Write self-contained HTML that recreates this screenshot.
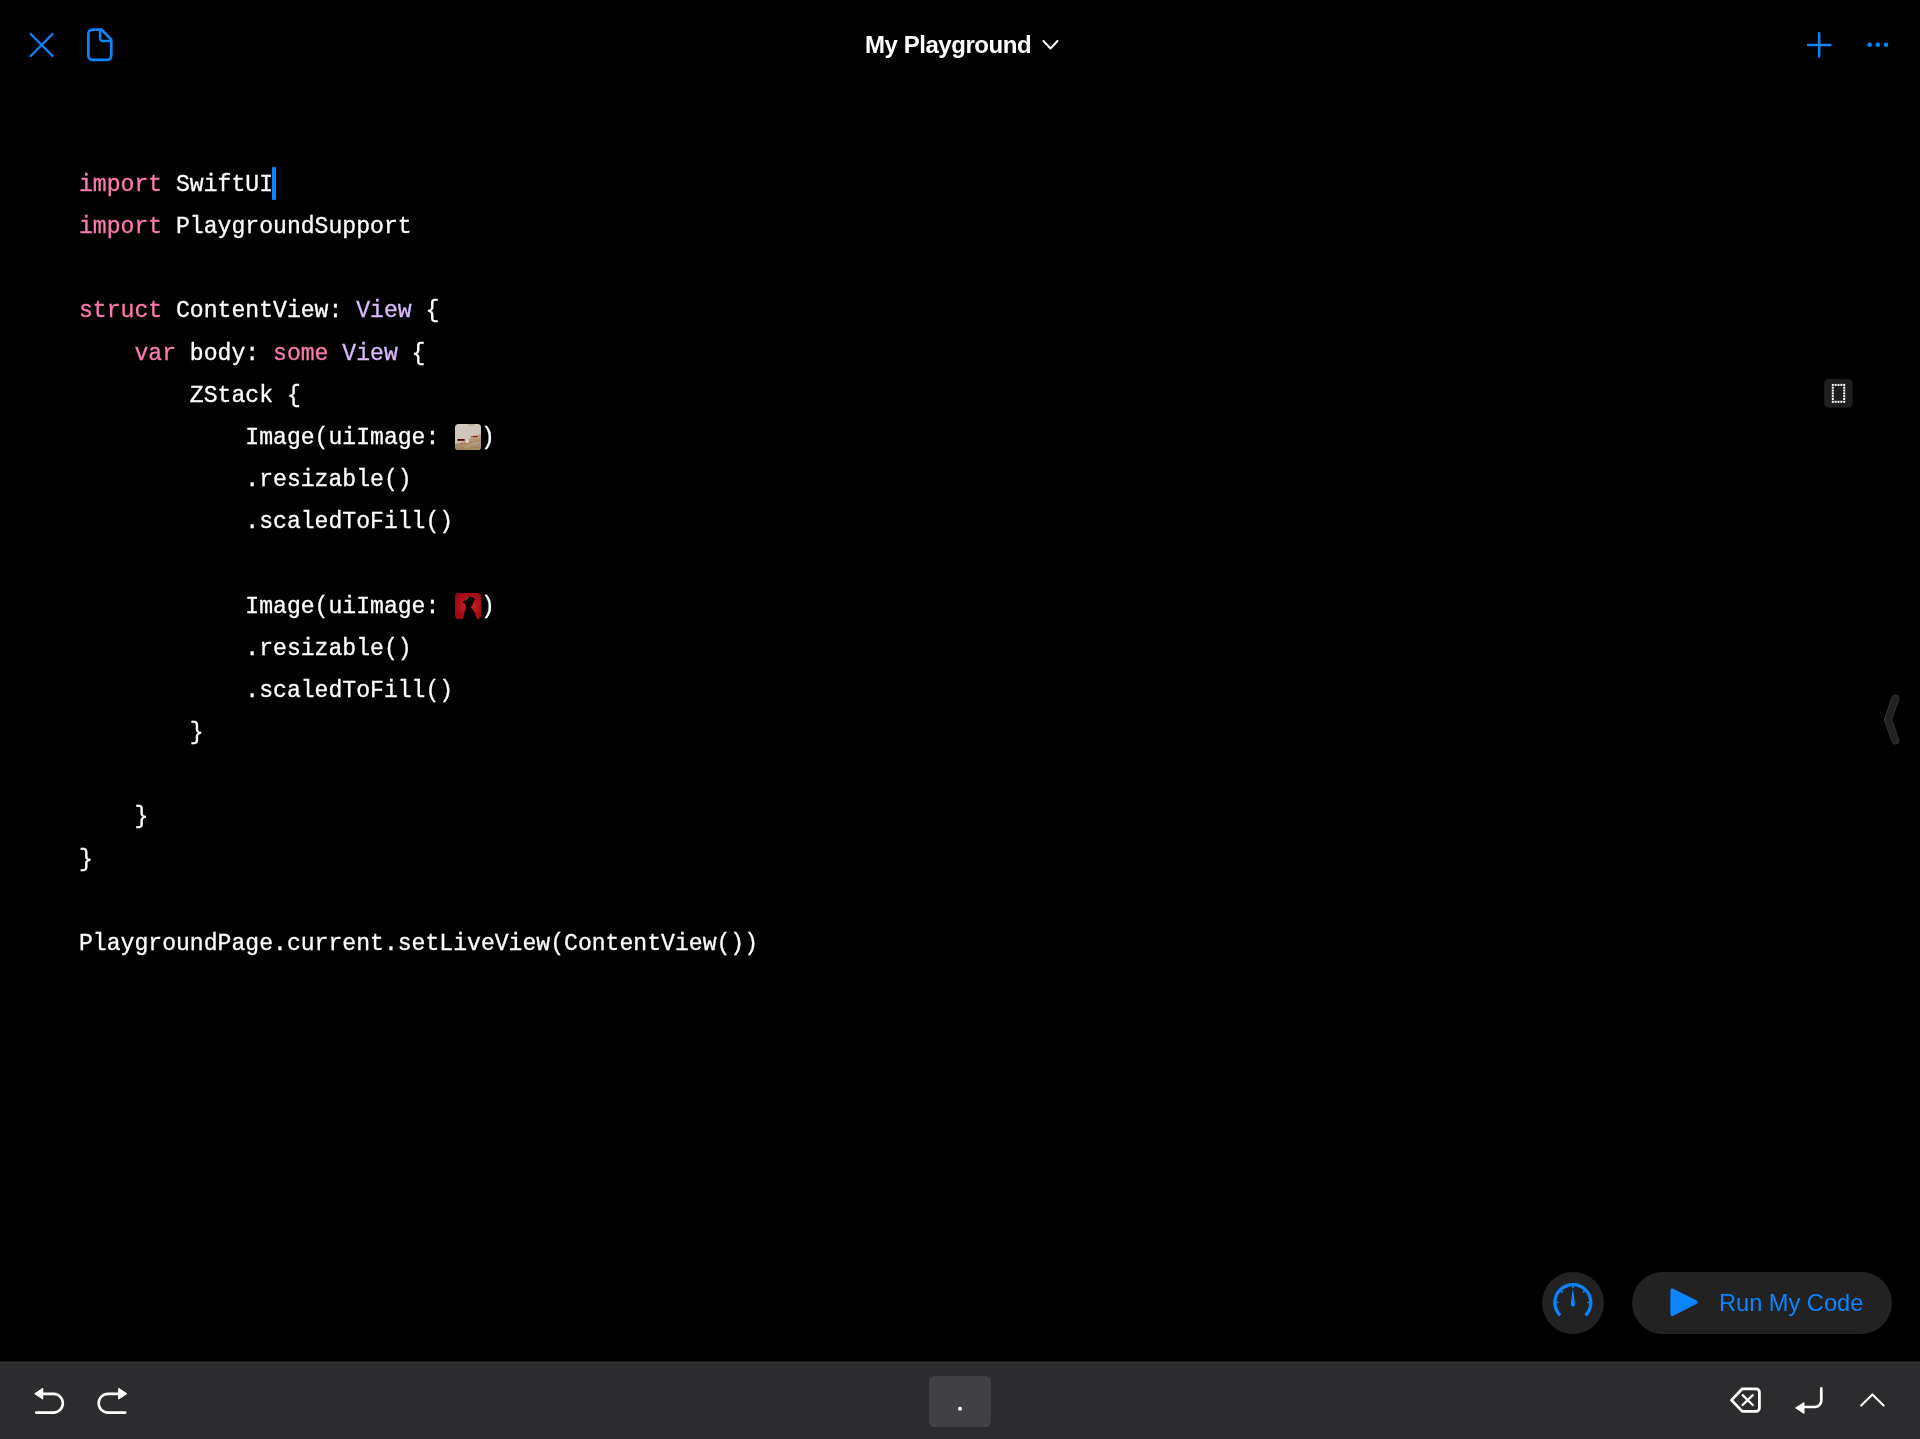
<!DOCTYPE html>
<html><head><meta charset="utf-8">
<style>
html,body{margin:0;padding:0;background:#000;width:1920px;height:1439px;overflow:hidden;position:relative;}
*{box-sizing:border-box;}
.abs{position:absolute;z-index:2;}
.code,.title,.runtxt{will-change:transform;}
.code{position:absolute;left:78.5px;top:164.3px;font-family:"Liberation Mono",monospace;font-size:23.1px;line-height:42.17px;color:#fff;}
.code div{height:42.17px;white-space:pre;}
.code{-webkit-text-stroke:0.3px currentColor;}
.k{color:#FF7AB2;}
.t{color:#DABAFF;}
.title{position:absolute;left:865px;top:27px;font-family:"Liberation Sans",sans-serif;font-weight:bold;font-size:24px;letter-spacing:-0.45px;color:#fff;line-height:36px;white-space:nowrap;}
.run{position:absolute;left:1632px;top:1271.5px;width:260px;height:62px;border-radius:31px;background:#222222;}
.gauge{position:absolute;left:1542px;top:1271.5px;width:62px;height:62px;border-radius:31px;background:#222222;}
.runtxt{position:absolute;left:1719px;top:1285px;font-family:"Liberation Sans",sans-serif;font-size:23.6px;line-height:36px;color:#0A84FF;white-space:nowrap;}
.bar{position:absolute;left:0;top:1361px;width:1920px;height:78px;background:linear-gradient(#1b1b1c 0,#1b1b1c 1px,#313133 1px,#313133 2px,#2C2C2E 2px);}
.key{position:absolute;left:929px;top:1376.3px;width:61.8px;height:50.6px;border-radius:5.5px;background:#414143;}
</style></head>
<body>
<!-- top bar icons -->
<svg class="abs" style="left:0;top:0" width="1920" height="100" viewBox="0 0 1920 100">
  <g stroke="#0A84FF" fill="none" stroke-linecap="round" stroke-linejoin="round">
    <path d="M30.7 34 L52.5 56 M52.5 34 L30.7 56" stroke-width="2.3"/>
    <path d="M92.6 29.55 H101.3 L111.25 39.6 V55.7 A4.25 4.25 0 0 1 107 59.95 H92.6 A4.25 4.25 0 0 1 88.35 55.7 V33.8 A4.25 4.25 0 0 1 92.6 29.55 Z" stroke-width="2.7"/>
    <path d="M100.1 30 V38.6 A2.5 2.5 0 0 0 102.6 41.1 H111" stroke-width="2.5"/>
    <path d="M1808 45 H1830.4 M1819.2 33.3 V56.6" stroke-width="2.5"/>
  </g>
  <g fill="#0A84FF">
    <circle cx="1869.6" cy="44.75" r="2.3"/>
    <circle cx="1877.8" cy="44.75" r="2.3"/>
    <circle cx="1886" cy="44.75" r="2.3"/>
  </g>
  <path d="M1043.5 41 L1050.5 48.5 L1057.5 41" stroke="#fff" stroke-width="2" fill="none" stroke-linecap="round" stroke-linejoin="round"/>
</svg>
<div class="title">My Playground</div>

<div class="code">
<div><span class="k">import</span> SwiftUI</div>
<div><span class="k">import</span> PlaygroundSupport</div>
<div> </div>
<div><span class="k">struct</span> ContentView: <span class="t">View</span> {</div>
<div>    <span class="k">var</span> body: <span class="k">some</span> <span class="t">View</span> {</div>
<div>        ZStack {</div>
<div>            Image(uiImage:   )</div>
<div>            .resizable()</div>
<div>            .scaledToFill()</div>
<div> </div>
<div>            Image(uiImage:   )</div>
<div>            .resizable()</div>
<div>            .scaledToFill()</div>
<div>        }</div>
<div> </div>
<div>    }</div>
<div>}</div>
<div> </div>
<div>PlaygroundPage.current.setLiveView(ContentView())</div>
</div>
<!-- cursor -->
<div class="abs" style="left:272px;top:167px;width:4px;height:33px;background:#0A84FF;border-radius:1px"></div>


<!-- thumbnails -->
<svg class="abs" style="left:455px;top:423.9px" width="26" height="26" viewBox="0 0 26 26">
  <defs>
    <clipPath id="c1"><rect x="0" y="0" width="26" height="26" rx="3.5"/></clipPath>
    <linearGradient id="g1" x1="0" y1="0" x2="0.3" y2="1">
      <stop offset="0" stop-color="#d3ccc4"/>
      <stop offset="0.55" stop-color="#cdc5bb"/>
      <stop offset="1" stop-color="#c4b8a8"/>
    </linearGradient>
    <linearGradient id="g1b" x1="0" y1="0" x2="0" y2="1">
      <stop offset="0" stop-color="#bca386"/>
      <stop offset="1" stop-color="#a88a66"/>
    </linearGradient>
  </defs>
  <g clip-path="url(#c1)">
    <rect width="26" height="26" fill="url(#g1)"/>
    <path d="M0 20 L8 17.5 L16 14 L22 11 L26 9.5 L26 26 L0 26 Z" fill="url(#g1b)"/>
    <rect x="13" y="0" width="6.5" height="1.8" fill="#bfa88a" opacity="0.8"/>
    <path d="M0 22 L26 16 M0 25 L26 19.5 M4 26 L26 22.5" stroke="#96764f" stroke-width="1" opacity="0.55"/>
    <path d="M2 19 L14 16.5 M10 23 L24 19" stroke="#d4c6b2" stroke-width="0.8" opacity="0.6"/>
    <rect x="2.7" y="15" width="7" height="1.8" fill="#5a0608"/>
    <rect x="2.7" y="15.1" width="1.4" height="1.5" fill="#1a0404"/>
    <rect x="10.8" y="15.5" width="3" height="3.6" fill="#ddd2c4"/>
    <rect x="15.5" y="12" width="2.5" height="1.2" fill="#b8641e"/>
    <rect x="18" y="11.9" width="4.6" height="1.3" fill="#a0141a"/>
    <circle cx="6.3" cy="19.6" r="0.7" fill="#c06a18"/>
    <rect x="11" y="19.2" width="2.4" height="0.9" fill="#c4701c"/>
  </g>
</svg>
<svg class="abs" style="left:455px;top:592.8px" width="26" height="26" viewBox="0 0 26 26">
  <defs>
    <clipPath id="c2"><rect x="0" y="0" width="26" height="26" rx="3.5"/></clipPath>
    <radialGradient id="g2" cx="0.55" cy="0.5" r="0.6">
      <stop offset="0" stop-color="#d42226"/>
      <stop offset="1" stop-color="#9a0812"/>
    </radialGradient>
  </defs>
  <g clip-path="url(#c2)">
    <rect width="26" height="26" fill="url(#g2)"/>
    <path d="M9 8 L13 3.5 L17 3.8 L20 6 L18 10 L17.5 12 L15.5 14 L19 18 L22 26 L8 26 L9.5 19 L11 15 L10.5 11 L7.5 9.5 Z" fill="#050000"/>
    <path d="M9.5 7.5 L13 3.5 L14 4.5 L10.5 8 Z" fill="#8a7a50" opacity="0.7"/>
  </g>
</svg>

<!-- side controls -->
<svg class="abs" style="left:1800px;top:370px" width="120" height="390" viewBox="1800 370 120 390">
  <rect x="1824.2" y="379" width="28.5" height="28.7" rx="4.5" fill="#1e1e1f"/>
  <g fill="#fff">
    <rect x="1831.80" y="383.90" width="2" height="2"/>
    <rect x="1831.80" y="386.72" width="2" height="2"/>
    <rect x="1831.80" y="389.53" width="2" height="2"/>
    <rect x="1831.80" y="392.35" width="2" height="2"/>
    <rect x="1831.80" y="395.17" width="2" height="2"/>
    <rect x="1831.80" y="397.98" width="2" height="2"/>
    <rect x="1831.80" y="400.80" width="2" height="2"/>
    <rect x="1834.65" y="383.90" width="2" height="2"/>
    <rect x="1834.65" y="400.80" width="2" height="2"/>
    <rect x="1837.50" y="383.90" width="2" height="2"/>
    <rect x="1837.50" y="400.80" width="2" height="2"/>
    <rect x="1840.35" y="383.90" width="2" height="2"/>
    <rect x="1840.35" y="400.80" width="2" height="2"/>
    <rect x="1843.20" y="383.90" width="2" height="2"/>
    <rect x="1843.20" y="386.72" width="2" height="2"/>
    <rect x="1843.20" y="389.53" width="2" height="2"/>
    <rect x="1843.20" y="392.35" width="2" height="2"/>
    <rect x="1843.20" y="395.17" width="2" height="2"/>
    <rect x="1843.20" y="397.98" width="2" height="2"/>
    <rect x="1843.20" y="400.80" width="2" height="2"/>
  </g>
  <path d="M1895.3 698.6 L1888 719.5 L1895.3 740.5" stroke="#333335" stroke-width="8" fill="none" stroke-linecap="round" stroke-linejoin="round"/>
  <path d="M1895.3 698.6 L1888 719.5 L1895.3 740.5" stroke="#222223" stroke-width="6" fill="none" stroke-linecap="round" stroke-linejoin="round"/>
</svg>

<!-- gauge + play -->
<svg class="abs" style="left:1540px;top:1270px" width="180" height="65" viewBox="1540 1270 180 65">
  <g stroke="#0A84FF" fill="none">
    <path d="M1560.12 1315.33 A18.0 18.0 0 1 1 1585.58 1315.33" stroke-width="3.3" stroke-linecap="butt"/>
    <path d="M1556.25 1302.60 L1558.55 1302.60 M1561.11 1290.86 L1562.74 1292.49 M1572.85 1286.00 L1572.85 1288.30 M1584.59 1290.86 L1582.96 1292.49 M1589.45 1302.60 L1587.15 1302.60" stroke-width="1.5"/>
  </g>
  <path d="M1572.5 1290 L1573.2 1290 L1575 1304.6 A2.15 2.15 0 1 1 1570.7 1304.6 Z" fill="#0A84FF"/>
  <path d="M1670.4 1291 Q1670.4 1287.1 1673.8 1288.9 L1696.3 1300.3 Q1699 1302.2 1696.3 1304.1 L1673.8 1315.5 Q1670.4 1317.3 1670.4 1313.4 Z" fill="#0A84FF"/>
</svg>

<!-- bottom buttons -->
<div class="gauge"></div>
<div class="run"></div>
<div class="runtxt">Run My Code</div>

<div class="bar"></div>
<div class="key"></div>

<!-- bottom bar icons -->
<svg class="abs" style="left:0;top:1362px" width="1920" height="77" viewBox="0 1362 1920 77">
  <g stroke="#fff" fill="none" stroke-width="2.6" stroke-linecap="round" stroke-linejoin="round">
    <path d="M42 1393.9 H53.5 A9.35 9.35 0 0 1 53.5 1412.6 H36.2"/>
    <path d="M119.5 1393.9 H108 A9.35 9.35 0 0 0 108 1412.6 H125.3"/>
    <path d="M1742.3 1388.8 H1756 A3.4 3.4 0 0 1 1759.4 1392.2 V1408 A3.4 3.4 0 0 1 1756 1411.4 H1742.3 L1731.5 1400.1 Z" stroke-width="2.8"/>
    <path d="M1742.6 1395.2 L1752.8 1405 M1752.8 1395.2 L1742.6 1405" stroke-width="2.3"/>
    <path d="M1821.3 1388.4 V1400.6 A6.4 6.4 0 0 1 1814.9 1407 H1802" stroke-width="2.7"/>
    <path d="M1861.2 1405.6 L1872.4 1394.4 L1883.6 1405.6" stroke-width="2.1"/>
  </g>
  <g fill="#fff">
    <path d="M34.7 1393.7 L42.8 1388.3 L42.8 1399.1 Z" stroke="#fff" stroke-width="1" stroke-linejoin="round"/>
    <path d="M126.8 1393.7 L118.7 1388.3 L118.7 1399.1 Z" stroke="#fff" stroke-width="1" stroke-linejoin="round"/>
    <path d="M1795.6 1407.9 L1804 1402.6 L1804 1413.4 Z" stroke="#fff" stroke-width="1" stroke-linejoin="round"/>
    <circle cx="960" cy="1408.8" r="2"/>
  </g>
</svg>
</body></html>
